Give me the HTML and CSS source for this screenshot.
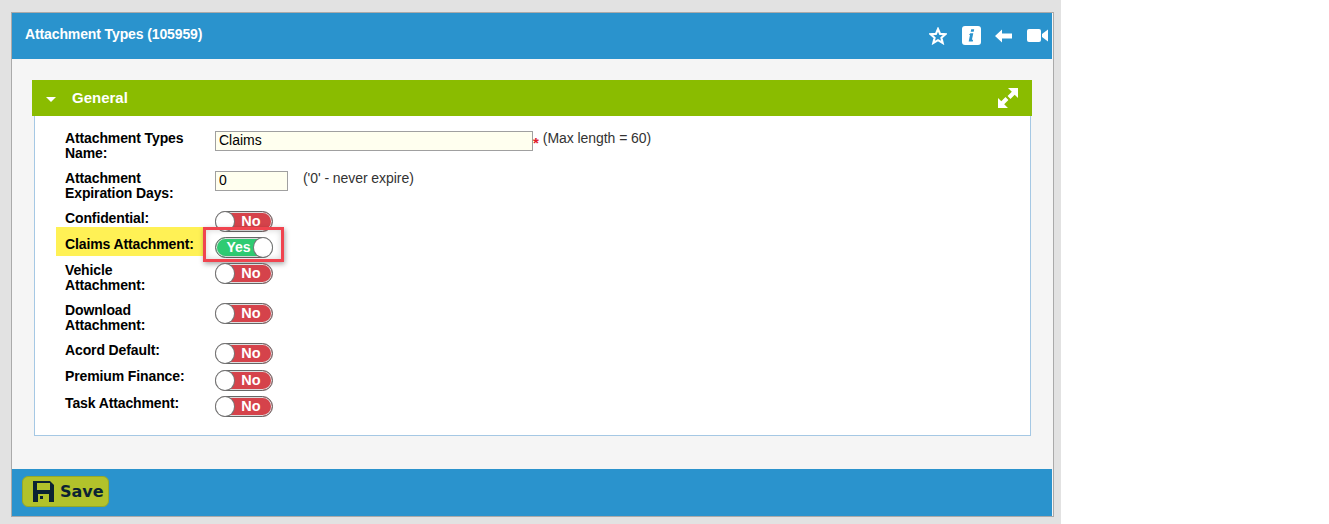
FILE: index.html
```html
<!DOCTYPE html>
<html lang="en">
<head>
    <meta charset="UTF-8">
    <meta name="viewport" content="width=device-width, initial-scale=1.0">
    <title>Attachment Types</title>
    <link rel="stylesheet" href="styles.css">
</head>
<body>
    <div class="backdrop">
        <div class="window">

            <header class="title-bar">
                <h1>Attachment Types (105959)</h1>
                <div class="title-icons">
                    <svg class="icon-star" width="18" height="18" viewBox="0 0 18 18"><path d="M9 2l2.100 4.900 5.300.4-4 3.500 1.300 5.200L9 13.200 4.300 16l1.300-5.200-4-3.500 5.300-.4z" fill="none" stroke="#fff" stroke-width="2.100"/></svg>
                    <svg class="icon-info" width="19" height="19" viewBox="0 0 19 19"><rect width="19" height="19" rx="3" fill="#fff"/><path d="M9.200 3.200h3l-.5 2.600h-3zM8.300 7.300h3l-1.400 6.400h1.200l-.3 1.700H6.700l1.300-6.400H7z" fill="#2a93cd"/></svg>
                    <svg class="icon-back" width="17" height="14" viewBox="0 0 17 14"><path d="M0 7l7-6.500V4.500h10v5H7v4z" fill="#fff"/></svg>
                    <svg class="icon-video" width="21" height="13" viewBox="0 0 21 13"><rect width="14" height="13" rx="2" fill="#fff"/><path d="M15 5l6-4.500v12L15 8z" fill="#fff"/></svg>
                </div>
            </header>

            <main class="content">
                <section class="panel">
                    <div class="panel-head">
                        <span class="caret"></span>
                        <h2>General</h2>
                        <svg class="icon-expand" width="22" height="22" viewBox="0 0 22 22"><path d="M11 1h10v10l-3.300-3.300-4.200 4.200-2.900-2.900 4.200-4.200zM11 21H1V11l3.300 3.300 4.200-4.200 2.900 2.900-4.200 4.200z" fill="#fff"/></svg>
                    </div>
                    <div class="panel-body">
                        <div class="row row-tall">
                            <label class="field-label">Attachment Types Name:</label>
                            <input class="text-input input-name" type="text" value="Claims">
                            <span class="required">*</span>
                            <span class="hint">(Max length = 60)</span>
                        </div>
                        <div class="row row-tall">
                            <label class="field-label">Attachment Expiration Days:</label>
                            <input class="text-input input-days" type="text" value="0">
                            <span class="hint hint-days">('0' - never expire)</span>
                        </div>
                        <div class="row row-short">
                            <label class="field-label">Confidential:</label>
                            <span class="toggle toggle-no"><i class="knob"></i><b>No</b></span>
                        </div>
                        <div class="row row-short">
                            <label class="field-label field-marked">Claims Attachment:</label>
                            <span class="toggle toggle-yes toggle-marked"><b>Yes</b><i class="knob"></i></span>
                        </div>
                        <div class="row row-tall">
                            <label class="field-label">Vehicle Attachment:</label>
                            <span class="toggle toggle-no"><i class="knob"></i><b>No</b></span>
                        </div>
                        <div class="row row-tall">
                            <label class="field-label">Download Attachment:</label>
                            <span class="toggle toggle-no"><i class="knob"></i><b>No</b></span>
                        </div>
                        <div class="row row-acord">
                            <label class="field-label">Acord Default:</label>
                            <span class="toggle toggle-no"><i class="knob"></i><b>No</b></span>
                        </div>
                        <div class="row row-short">
                            <label class="field-label field-up">Premium Finance:</label>
                            <span class="toggle toggle-no"><i class="knob"></i><b>No</b></span>
                        </div>
                        <div class="row">
                            <label class="field-label">Task Attachment:</label>
                            <span class="toggle toggle-no"><i class="knob"></i><b>No</b></span>
                        </div>
                    </div>
                </section>
            </main>

            <footer class="action-bar">
                <button class="save-btn" type="button">
                    <svg width="21" height="21" viewBox="0 0 21 21"><path d="M0 0h17l4 4v17H0z" fill="#0c2233"/><rect x="4" y="2" width="13" height="7" fill="#b2c22b"/><rect x="5" y="13" width="11" height="8" fill="#b2c22b"/><rect x="7" y="15" width="3" height="3" fill="#0c2233"/></svg>
                    <span>Save</span>
                </button>
            </footer>

        </div>
    </div>
</body>
</html>
```

FILE: styles.css
```css
html, body {
    margin: 0;
    padding: 0;
    height: 100%;
    background-color: #fff;
    overflow: hidden;
}
body {
    font-family: "Liberation Sans", Arial, sans-serif;
    font-size: 14px;
    color: #000;
}
.backdrop {
    width: 1061px;
    height: 524px;
    box-sizing: border-box;
    padding: 12px 7px 7px 11px;
    background-color: #e2e2e2;
}
.window {
    height: 505px;
    box-sizing: border-box;
    display: flex;
    flex-direction: column;
    background-color: #f5f5f5;
    border: 1px solid #aaa;
}
.title-bar {
    flex: 0 0 46px;
    margin-right: 1px;
    display: flex;
    align-items: center;
    justify-content: space-between;
    background-color: #2a93cd;
    overflow: hidden;
}
.title-bar h1 {
    margin: 0 0 4px 13px;
    font-size: 14px;
    font-weight: bold;
    letter-spacing: -0.12px;
    color: #fff;
}
.title-icons {
    display: flex;
    align-items: center;
    width: 123px;
    flex: none;
    margin-bottom: 1px;
}
.icon-star { margin-right: 15px; }
.icon-info { margin-right: 14px; }
.icon-back { margin-right: 15px; flex: none; }
.icon-video { flex: none; }
.content {
    flex: 1;
    padding: 21px 21px 0 20px;
}
.panel-head {
    height: 36px;
    display: flex;
    align-items: center;
    background-color: #8abc00;
    color: #fff;
}
.caret {
    width: 0;
    height: 0;
    margin: 2px 0 0 14px;
    border-left: 5px solid transparent;
    border-right: 5px solid transparent;
    border-top: 5px solid #fff;
}
.panel-head h2 {
    flex: 1;
    margin: 0 0 2px 16px;
    font-size: 15px;
    font-weight: bold;
}
.icon-expand { margin-right: 13px; }
.panel-body {
    margin: 0 1px 0 2px;
    height: 320px;
    box-sizing: border-box;
    padding-top: 15px;
    padding-left: 30px;
    background-color: #fff;
    border: 1px solid #a5c8e4;
    border-top: 0;
}
.row {
    display: flex;
    align-items: flex-start;
    position: relative;
}
.row-tall { height: 40px; }
.row-short { height: 26px; }
.row-acord { height: 27px; }
.field-label {
    flex: 0 0 150px;
    box-sizing: border-box;
    padding-right: 25px;
    font-weight: bold;
    line-height: 15px;
    letter-spacing: -0.12px;
}
.field-up { margin-top: -1px; }
.field-marked {
    padding: 10px 0 0 9px;
    margin: -10px 12px 0 -9px;
    flex: 0 0 147px;
    height: 29px;
    background-color: #fff155;
}
.text-input {
    height: 20px;
    box-sizing: border-box;
    padding: 0 3px 2px;
    border: 1px solid #a0a0a0;
    background-color: #ffffef;
    font-family: inherit;
    font-size: 14px;
    color: #000;
    border-radius: 0;
    outline: 0;
}
.input-name { width: 318px; }
.input-days { width: 73px; }
.required {
    color: #e0202a;
    font-size: 15px;
    font-weight: bold;
    line-height: 24px;
}
.hint {
    margin-left: 4px;
    line-height: 15px;
    letter-spacing: -0.06px;
    color: #333;
}
.hint-days { margin-left: 15px; }
.toggle {
    width: 58px;
    height: 21px;
    box-sizing: border-box;
    display: flex;
    align-items: center;
    border: 1px solid #666;
    border-radius: 11px;
    color: #fff;
    font-weight: bold;
    box-shadow: inset 0 0 0 1px #ddd;
}
.toggle b { flex: 1; text-align: center; margin-bottom: 2px; }
.toggle-no { background-color: #d5434b; }
.toggle-no b { padding-right: 4px; font-size: 14.5px; }
.toggle-yes { background-color: #2fcb72; }
.toggle-yes b { padding-left: 7px; }
.knob {
    flex: none;
    width: 18px;
    height: 19px;
    border-radius: 50%;
    background-color: #fff;
    box-shadow: 0 0 0 1px #777;
}
/* red box from the annotated screenshot */
.toggle-marked { position: relative; }
.toggle-marked::after {
    content: "";
    position: absolute;
    left: -13px;
    right: -12px;
    top: -11px;
    bottom: -5px;
    border: 3px solid #f0444f;
    box-shadow: 1px 2px 5px rgba(0, 0, 0, 0.35), inset 0 0 6px rgba(0, 0, 0, 0.18);
}
.action-bar {
    flex: 0 0 47px;
    margin-right: 1px;
    display: flex;
    align-items: center;
    padding-left: 10px;
    background-color: #2a93cd;
}
.save-btn {
    width: 87px;
    height: 31px;
    margin-bottom: 2px;
    padding: 0 0 0 10px;
    display: flex;
    align-items: center;
    gap: 6px;
    background-color: #b2c22b;
    border: 1px solid #94a82a;
    border-radius: 6px;
    font-family: "DejaVu Sans", sans-serif;
    font-size: 16px;
    font-weight: bold;
    color: #0c2233;
}
```
